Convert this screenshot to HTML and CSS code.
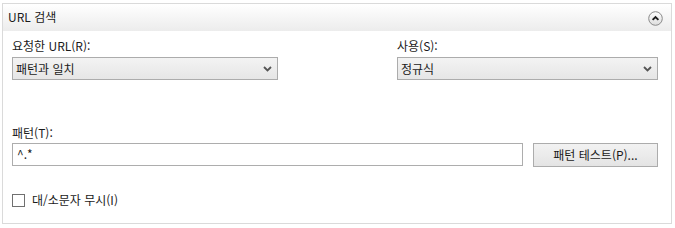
FILE: index.html
```html
<!DOCTYPE html>
<html lang="ko">
<head>
<meta charset="utf-8">
<link rel="stylesheet" href="styles.css">
</head>
<body>
<div class="panel">
  <div class="header">
    <span class="title">URL 검색</span>
    <span class="collapse">
      <svg width="15" height="15" viewBox="0 0 15 15">
        <defs>
          <linearGradient id="g" x1="0" y1="0" x2="0" y2="1">
            <stop offset="0" stop-color="#ffffff"/>
            <stop offset="1" stop-color="#dcdcdc"/>
          </linearGradient>
        </defs>
        <circle cx="7.5" cy="7.5" r="6.8" fill="url(#g)" stroke="#8a8a8a" stroke-width="1"/>
        <path d="M4.6 8.9 L7.5 6 L10.4 8.9" fill="none" stroke="#1e1e1e" stroke-width="1.9"/>
      </svg>
    </span>
  </div>
  <div class="body">
    <div class="row-top">
      <div class="field field-left">
        <label class="lbl">요청한 URL(R):</label>
        <div class="select"><span>패턴과 일치</span><span class="chev"><svg width="9" height="6" viewBox="0 0 9 6"><path d="M1 1 L4.5 4.5 L8 1" fill="none" stroke="#555" stroke-width="1.8"/></svg></span></div>
      </div>
      <div class="field field-right">
        <label class="lbl">사용(S):</label>
        <div class="select"><span>정규식</span><span class="chev"><svg width="9" height="6" viewBox="0 0 9 6"><path d="M1 1 L4.5 4.5 L8 1" fill="none" stroke="#555" stroke-width="1.8"/></svg></span></div>
      </div>
    </div>
    <div class="pattern">
      <label class="lbl">패턴(T):</label>
      <div class="pattern-row">
        <div class="input">^.*</div>
        <div class="btn">패턴 테스트(P)...</div>
      </div>
    </div>
    <div class="check-row">
      <span class="checkbox"></span>
      <span class="check-lbl">대/소문자 무시(I)</span>
    </div>
  </div>
</div>
</body>
</html>
```
FILE: styles.css
```css
html, body {
  margin: 0;
  padding: 0;
  background: #ffffff;
}
body {
  font-family: "Noto Sans CJK KR", "Noto Sans", "Liberation Sans", sans-serif;
  font-size: 12px;
  color: #1a1a1a;
  width: 675px;
  height: 228px;
  overflow: hidden;
}
.panel {
  margin: 3px 0 0 2px;
  width: 670px;
  height: 221px;
  box-sizing: border-box;
  border: 1px solid #dadada;
  display: flex;
  flex-direction: column;
}
.header {
  height: 27px;
  background: linear-gradient(#ffffff, #ececec);
  display: flex;
  align-items: center;
  justify-content: space-between;
  padding: 0 8px 0 5px;
}
.title {
  line-height: 16px;
  margin-top: -1px;
}
.collapse {
  display: flex;
  margin-top: 1px;
}
.body {
  padding: 7px 13px 0 9px;
  display: flex;
  flex-direction: column;
}
.row-top {
  display: flex;
  justify-content: space-between;
}
.field {
  display: flex;
  flex-direction: column;
  gap: 3px;
}
.field-left { width: 266px; }
.field-right { width: 261px; }
.lbl {
  line-height: 16px;
  height: 16px;
}
.select {
  height: 23px;
  box-sizing: border-box;
  border: 1px solid #acacac;
  background: linear-gradient(#f3f3f3, #e6e6e6);
  display: flex;
  align-items: center;
  justify-content: space-between;
  padding: 0 5px 0 3px;
  line-height: 16px;
}
.chev {
  display: flex;
}
.pattern {
  margin-top: 45px;
  display: flex;
  flex-direction: column;
  gap: 2px;
}
.pattern-row {
  display: flex;
  gap: 10px;
}
.input {
  width: 511px;
  height: 23px;
  box-sizing: border-box;
  border: 1px solid #adadad;
  background: #fff;
  padding: 0 4px;
  line-height: 19px;
}
.btn {
  width: 125px;
  height: 24px;
  box-sizing: border-box;
  border: 1px solid #acacac;
  background: linear-gradient(#f2f2f2, #e4e4e4);
  display: flex;
  align-items: center;
  justify-content: center;
  line-height: 16px;
}
.check-row {
  margin-top: 25px;
  display: flex;
  align-items: center;
  gap: 7px;
}
.checkbox {
  width: 13px;
  height: 13px;
  box-sizing: border-box;
  border: 1px solid #707070;
  background: #fff;
}
.check-lbl {
  line-height: 16px;
}
```
